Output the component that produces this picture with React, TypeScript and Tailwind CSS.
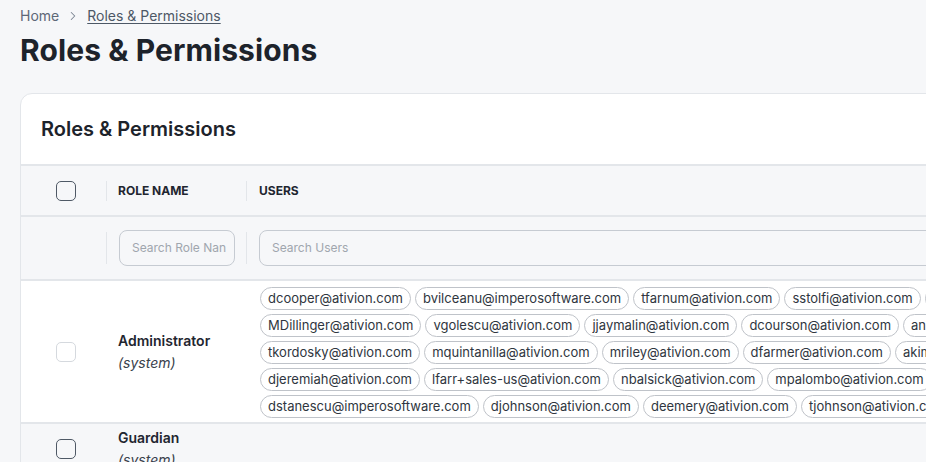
import { ChevronRight } from "lucide-react";

const CHIP_ROWS = [
  ["dcooper@ativion.com", "bvilceanu@imperosoftware.com", "tfarnum@ativion.com", "sstolfi@ativion.com", "amartin@ativion.com"],
  ["MDillinger@ativion.com", "vgolescu@ativion.com", "jjaymalin@ativion.com", "dcourson@ativion.com", "anguyen@ativion.com"],
  ["tkordosky@ativion.com", "mquintanilla@ativion.com", "mriley@ativion.com", "dfarmer@ativion.com", "akim@ativion.com"],
  ["djeremiah@ativion.com", "lfarr+sales-us@ativion.com", "nbalsick@ativion.com", "mpalombo@ativion.com", "rwhite@ativion.com"],
  ["dstanescu@imperosoftware.com", "djohnson@ativion.com", "deemery@ativion.com", "tjohnson@ativion.com", "kbrown@ativion.com"],
];

function Checkbox({ light }: { light?: boolean }) {
  return (
    <div
      className={
        "w-5 h-5 rounded-[5px] border-[1.5px] " +
        (light ? "border-[#d5d9de] bg-white" : "border-[#4f5966]")
      }
    />
  );
}

function Divider({ tall }: { tall?: boolean }) {
  return <div className={"w-px bg-[#e3e6ea] shrink-0 " + (tall ? "h-8" : "h-5")} />;
}

export default function App() {
  return (
    <div
      className="h-[462px] w-full overflow-hidden bg-[#f6f7f9] text-[#1d232b]"
      style={{ fontFamily: "Inter, 'Noto Sans', sans-serif" }}
    >
      <div className="pl-5 pt-[6px]">
        <nav className="flex items-center text-sm leading-5 text-[#5d6877]">
          <span>Home</span>
          <ChevronRight className="w-[14px] h-[14px] mx-[7px] text-[#7a8491]" strokeWidth={1.75} />
          <span className="underline underline-offset-2 text-[#4d5866]">Roles &amp; Permissions</span>
        </nav>
        <h1 className="mt-[6px] text-3xl leading-9 font-bold tracking-[0.1px]">Roles &amp; Permissions</h1>

        <div className="mt-[25px] w-[1200px] rounded-xl border border-[#e3e6ea] bg-white">
          <div className="border-b-2 border-[#e3e6ea] px-5 py-[21px]">
            <h2 className="text-xl leading-7 font-semibold">Roles &amp; Permissions</h2>
          </div>

          {/* header row */}
          <div className="grid grid-cols-[85px_140px_1fr] h-[51px] bg-[#f6f7f9] border-b-2 border-[#e3e6ea] items-center">
            <div className="pl-[35px]">
              <Checkbox />
            </div>
            <div className="flex items-center">
              <Divider />
              <span className="pl-[11px] text-xs font-bold text-[#1f2630]">ROLE NAME</span>
            </div>
            <div className="flex items-center">
              <Divider />
              <span className="pl-3 text-xs font-bold text-[#1f2630]">USERS</span>
            </div>
          </div>

          {/* filter row */}
          <div className="grid grid-cols-[85px_140px_1fr] h-[64px] bg-[#f6f7f9] border-b-2 border-[#e3e6ea] items-center">
            <div />
            <div className="flex items-center">
              <Divider tall />
              <div className="ml-3 mr-[11px] h-9 flex-1 rounded-lg border border-[#c6cbd2] flex items-center px-3 overflow-hidden">
                <span className="text-xs text-[#a0a6ae] whitespace-nowrap">Search Role Nan</span>
              </div>
            </div>
            <div className="flex items-center">
              <Divider tall />
              <div className="ml-3 h-9 flex-1 rounded-lg border border-[#c6cbd2] flex items-center px-3">
                <span className="text-xs text-[#a0a6ae]">Search Users</span>
              </div>
            </div>
          </div>

          {/* Administrator row */}
          <div className="grid grid-cols-[85px_140px_1fr] bg-white border-b-2 border-[#e3e6ea] items-center">
            <div className="pl-[35px]">
              <Checkbox light />
            </div>
            <div className="pl-3 text-sm leading-[22px]">
              <div className="font-semibold text-[#1f2630]">Administrator</div>
              <div className="italic text-[#3a424d]">(system)</div>
            </div>
            <div className="pl-[14px] pt-[6px] pb-[4px] flex flex-col gap-1 overflow-hidden">
              {CHIP_ROWS.map((row, i) => (
                <div key={i} className="flex gap-1 whitespace-nowrap">
                  {row.map((email) => (
                    <span
                      key={email}
                      className="h-[23px] px-[7px] flex items-center rounded-full border border-[#bfc3c9] bg-white text-[13px] text-[#2f3640]"
                    >
                      {email}
                    </span>
                  ))}
                </div>
              ))}
            </div>
          </div>

          {/* Guardian row */}
          <div className="grid grid-cols-[85px_140px_1fr] bg-[#f6f7f9] items-center py-[3px]">
            <div className="pl-[35px]">
              <Checkbox />
            </div>
            <div className="pl-3 text-sm leading-[22px]">
              <div className="font-semibold text-[#1f2630]">Guardian</div>
              <div className="italic text-[#3a424d]">(system)</div>
            </div>
            <div />
          </div>
        </div>
      </div>
    </div>
  );
}
